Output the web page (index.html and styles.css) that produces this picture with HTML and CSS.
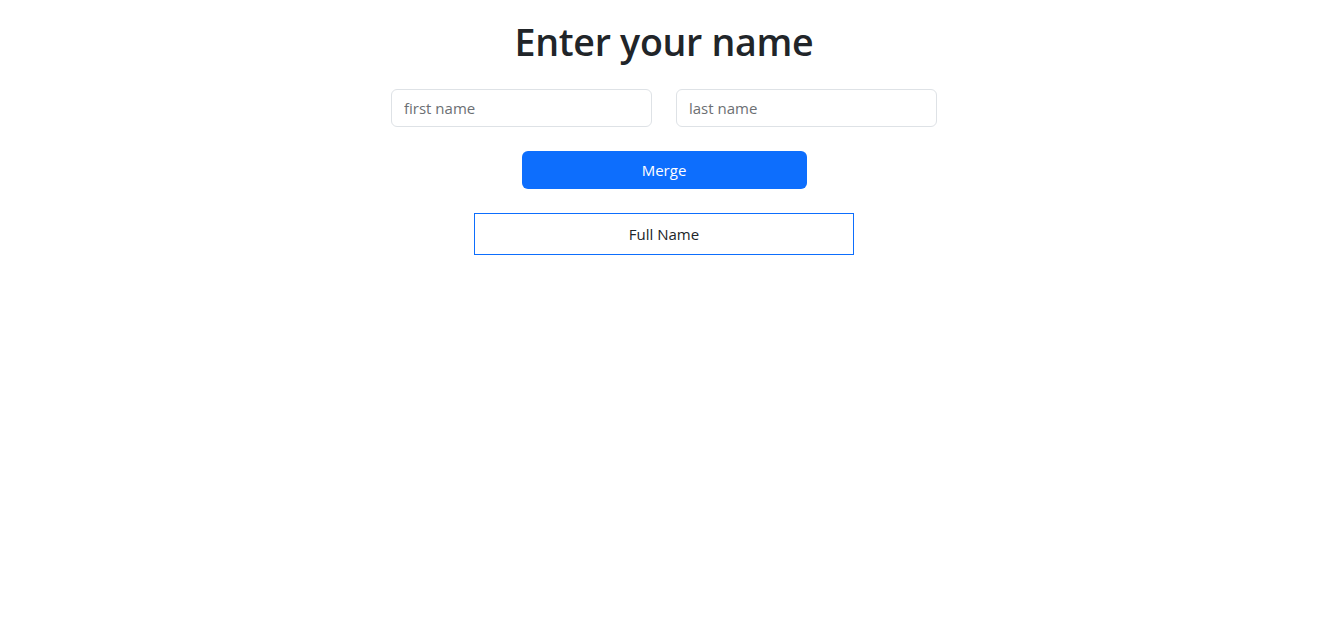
FILE: index.html
```html
<!DOCTYPE html>
<html lang="en">
<head>
<meta charset="utf-8">
<title>Enter your name</title>
<link rel="stylesheet" href="styles.css">
</head>
<body>
<main class="page">
  <h1 class="title">Enter your name</h1>
  <div class="inputs">
    <input class="field" type="text" placeholder="first name">
    <input class="field" type="text" placeholder="last name">
  </div>
  <button class="merge" type="button">Merge</button>
  <div class="result">Full Name</div>
</main>
</body>
</html>
```
FILE: styles.css
```css
* { box-sizing: border-box; }
html, body { margin: 0; padding: 0; background: #fff; }
body {
  font-family: "Open Sans", "Noto Sans", "Liberation Sans", sans-serif;
  color: #212529;
  font-size: 16px;
}
.page {
  display: flex;
  flex-direction: column;
  align-items: center;
  padding: 16px 5px 0 0;
}
.title {
  margin: 0;
  font-size: 37.6px;
  font-weight: 600;
  line-height: 52px;
  color: #212529;
  letter-spacing: -0.3px;
}
.inputs {
  display: flex;
  gap: 24px;
  margin-top: 21px;
}
.field {
  width: 261px;
  height: 38px;
  border: 1px solid #dee2e6;
  border-radius: 6px;
  padding: 0 12px;
  font-family: inherit;
  font-size: 15px;
  color: #212529;
  outline: none;
}
.field::placeholder { color: #6c6f73; }
.merge {
  margin-top: 24px;
  width: 285px;
  height: 38px;
  border: none;
  border-radius: 6px;
  background: #0d6efd;
  color: #fff;
  font-family: inherit;
  font-size: 15px;
}
.result {
  margin-top: 24px;
  width: 380px;
  height: 42px;
  border: 1px solid #0d6efd;
  display: flex;
  align-items: center;
  justify-content: center;
  font-size: 15px;
  color: #212529;
}
```
